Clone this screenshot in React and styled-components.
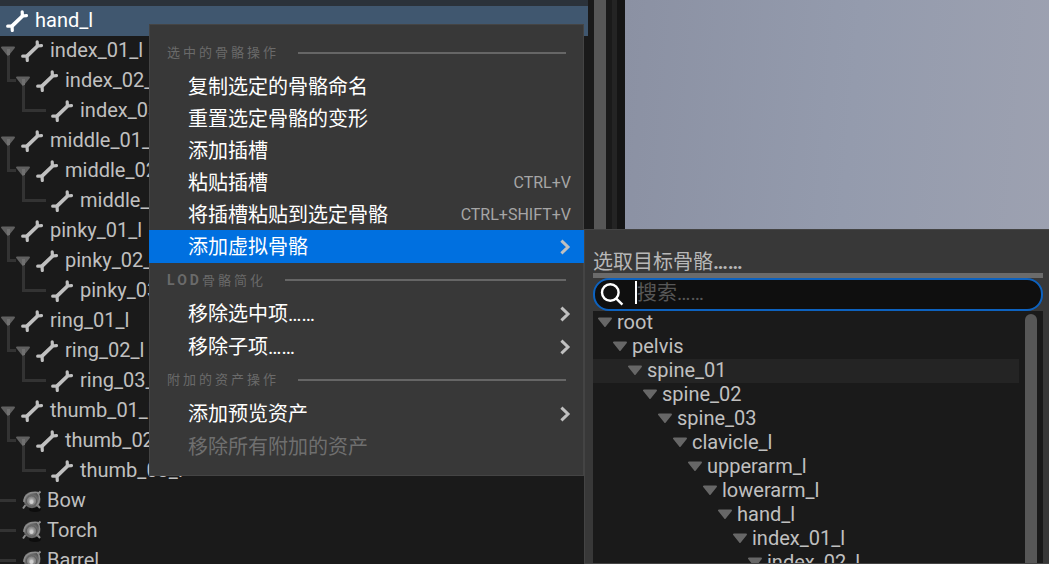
import styled, { createGlobalStyle } from "styled-components";

const GlobalStyle = createGlobalStyle`
  * {
    box-sizing: border-box;
  }

  body {
    margin: 0;
    overflow: hidden;
    background: #1a1a1a;
    color: #c0c0c0;
    font: 20px/24px Roboto, "Noto Sans CJK SC", sans-serif;
  }

  button,
  input {
    margin: 0;
    padding: 0;
    border: 0;
    font: inherit;
  }

  ul {
    margin: 0;
    padding: 0;
    list-style: none;
  }

  svg {
    display: block;
    flex: none;
  }
`;

const Editor = styled.main`
  position: relative;
  display: flex;
  height: 100vh;
  overflow: hidden;
`;

const SkeletonTree = styled.ul`
  flex: 0 0 588px;
  min-width: 0;
  border-top: 6px solid #2b323a;
`;

const TreeRow = styled.li`
  display: flex;
  align-items: center;
  height: 30px;
  white-space: nowrap;
  color: ${({ $selected }) => ($selected ? "#ffffff" : "#c0c0c0")};
  background: ${({ $selected }) => ($selected ? "#40576f" : "transparent")};
`;

const TreeLabel = styled.span`
  padding: 0 0 2px ${({ $gap }) => $gap}px;
`;

const TreeScroll = styled.div`
  flex: 0 0 24px;
  padding: 0 6px;
  background: #1a1a1a;

  div {
    height: 100%;
    background: #575757;
  }
`;

const Splitter = styled.div`
  flex: 0 0 13px;
  border-left: 5px solid #242424;
  background: #151515;
`;

const Viewport = styled.section`
  flex: 1;
  background: linear-gradient(95deg, #8b91a3 0%, #949bad 50%, #9ea2b1 100%);
`;

const ContextMenu = styled.div`
  position: absolute;
  top: 24px;
  left: 149px;
  width: 435px;
  padding: 12px 0 14px;
  background: #383838;
  box-shadow: inset 0 0 0 1px #444444;
`;

const SectionTitle = styled.div`
  display: flex;
  align-items: center;
  gap: 19px;
  height: 34px;
  padding: 0 18px;
  color: #6a6a6a;
  font-size: 13px;
  letter-spacing: 3px;

  b {
    font-size: 14px;
    font-weight: 700;
  }

  &::after {
    content: "";
    flex: 1;
    height: 2px;
    background: #666666;
  }
`;

const ItemSlot = styled.div`
  position: relative;
`;

const MenuItem = styled.button`
  display: flex;
  align-items: center;
  justify-content: space-between;
  width: 100%;
  height: ${({ $submenu }) => ($submenu ? 33 : 32)}px;
  padding: ${({ $submenu }) => ($submenu ? 0 : 2)}px 13px 0 39px;
  text-align: left;
  color: #ffffff;
  background: ${({ $active }) => ($active ? "#0070e0" : "transparent")};

  &:disabled {
    color: #6f6f6f;
  }

  kbd {
    color: #a6a6a6;
    font-family: inherit;
    font-size: 16px;
  }
`;

const BonePicker = styled.div`
  position: absolute;
  top: -1px;
  left: 100%;
  display: flex;
  flex-direction: column;
  width: 466px;
  height: calc(100vh - 229px);
  padding: 20px 6px 0 8px;
  border: 1px solid #444444;
  background: #383838;
`;

const PickerTitle = styled.div`
  height: 28px;
  flex: none;
  border-bottom: 5px solid #6b6b6b;
  line-height: 24px;
  color: #b8b8b8;

  b {
    font-weight: 700;
  }
`;

const SearchBox = styled.label`
  display: flex;
  align-items: center;
  flex: none;
  height: 33px;
  padding: 0 16px 0 5px;
  border: 2px solid #0d62bf;
  border-radius: 16px;
  background: #0f0f0f;

  input {
    flex: 1;
    min-width: 0;
    height: 29px;
    padding-bottom: 4px;
    outline: 0;
    color: #ffffff;
    background: transparent;
  }

  input::placeholder {
    color: #575757;
    opacity: 1;
  }
`;

const Caret = styled.span`
  width: 2px;
  height: 23px;
  margin: 0 0 4px 11px;
  background: #ffffff;
`;

const BoneListBox = styled.div`
  display: flex;
  flex: 1;
  min-height: 0;
  overflow: hidden;
  background: #1a1a1a;
`;

const BoneList = styled.ul`
  flex: 1;
`;

const BoneRow = styled.li`
  display: flex;
  align-items: center;
  gap: 5px;
  height: 24px;
  padding: 0 0 2px ${({ $depth }) => 5 + $depth * 15}px;
  background: ${({ $hover }) => ($hover ? "#242424" : "transparent")};
`;

const BoneScroll = styled.div`
  flex: 0 0 24px;
  padding: 3px 6px 0 6px;

  div {
    height: 100%;
    border-radius: 6px 6px 0 0;
    background: #575757;
  }
`;

const BoneIcon = () => (
  <svg width="22" height="22" viewBox="0 0 22 22" fill="none" stroke="currentColor" strokeLinecap="round" strokeLinejoin="round">
    <path d="M6.5 15.7 16 6.5" strokeWidth="3.8" />
    <path d="M16.2 1.8 16.4 6 20.5 5.6M1.7 16.2 6 16 6.3 20.5" strokeWidth="3.2" />
  </svg>
);

const SocketIcon = () => (
  <svg width="20" height="22" viewBox="0 0 20 22">
    <defs>
      <radialGradient id="socket" cx="47%" cy="55%" r="55%">
        <stop offset="0" stopColor="#d0d0d0" />
        <stop offset=".35" stopColor="#8c8c8c" />
        <stop offset="1" stopColor="#4c4c4c" />
      </radialGradient>
    </defs>
    <ellipse cx="14" cy="19.5" rx="6" ry="2.5" fill="#0d0d0d" />
    <path d="M16 4.5 19.5 1.5M4.5 15 2 18.5M16 14.5 19 18" stroke="#8f8f8f" strokeWidth="2" />
    <ellipse cx="11" cy="10" rx="8.5" ry="8.2" fill="url(#socket)" />
    <path d="M3 12C3 6 8 1.5 16.5 2.5 19.5 6 19 12 15.5 16" fill="none" stroke="#8c8c8c" strokeWidth="1.6" />
    <circle cx="10.5" cy="11" r="5.2" fill="none" stroke="#5c5c5c" strokeWidth="1" />
    <circle cx="10.5" cy="12" r="2" fill="#d0d0d0" />
  </svg>
);

const Chevron = () => (
  <svg width="12" height="16" viewBox="0 0 12 16" fill="none" stroke="#c0c0c0" strokeWidth="3">
    <path d="M2.4 1.6 9 8 2.4 14.4" />
  </svg>
);

const Triangle = () => (
  <svg width="14" height="10" viewBox="0 0 14 10">
    <path d="M1 1.5H13L7 9Z" fill="#676767" stroke="#676767" strokeWidth="2" strokeLinejoin="round" />
  </svg>
);

const SearchIcon = () => (
  <svg width="24" height="24" viewBox="0 0 24 24" fill="none" stroke="#ffffff" strokeWidth="2.4">
    <circle cx="10.3" cy="9.5" r="8.3" />
    <path d="M16.1 15.3 22.4 21.6" />
  </svg>
);

// connector lines and expander arrow in front of a tree row
const Guides = ({ depth, leaf, socket }) => {
  const width = depth * 15 + 6;
  const x = depth * 15 - 7;
  return (
    <svg width={width} height="30" viewBox={`0 0 ${width} 30`}>
      <g fill="none" stroke="#333333" strokeWidth="3">
        {socket && <path d="M0 14.5H16" />}
        {depth > 1 && <path d={`M${x - 14.5} 0V14.5H${leaf ? x + 8 : x - 7}`} />}
        {depth > 0 && !leaf && !socket && <path d={`M${x + 0.5} 18V30`} />}
      </g>
      {depth > 0 && !leaf && !socket && (
        <>
          <path d={`M${x - 6} 11.5H${x + 6}L${x} 19Z`} fill="#606060" stroke="#606060" strokeWidth="2" strokeLinejoin="round" />
          <path d={`M${x + 0.5} 13V19`} stroke="#707070" strokeWidth="3" />
        </>
      )}
    </svg>
  );
};

const fingers = ["index", "middle", "pinky", "ring", "thumb"];
const sockets = ["Bow", "Torch", "Barrel"];
const bones = [
  "root",
  "pelvis",
  "spine_01",
  "spine_02",
  "spine_03",
  "clavicle_l",
  "upperarm_l",
  "lowerarm_l",
  "hand_l",
  "index_01_l",
  "index_02_l",
];

const Bone = ({ name, depth, leaf, selected }) => (
  <TreeRow $selected={selected}>
    <Guides depth={depth} leaf={leaf} />
    <BoneIcon />
    <TreeLabel $gap={7}>{name}</TreeLabel>
  </TreeRow>
);

const App = () => {
  return (
    <Editor>
      <GlobalStyle />

      <SkeletonTree>
        <Bone name="hand_l" depth={0} selected />
        {fingers.map((finger) =>
          [1, 2, 3].map((n) => (
            <Bone key={finger + n} name={`${finger}_0${n}_l`} depth={n} leaf={n === 3} />
          ))
        )}
        {sockets.map((name) => (
          <TreeRow key={name}>
            <Guides depth={1} socket />
            <SocketIcon />
            <TreeLabel $gap={6}>{name}</TreeLabel>
          </TreeRow>
        ))}
      </SkeletonTree>
      <TreeScroll>
        <div />
      </TreeScroll>
      <Splitter />
      <Viewport />

      <ContextMenu>
        <SectionTitle>选中的骨骼操作</SectionTitle>
        <MenuItem>复制选定的骨骼命名</MenuItem>
        <MenuItem>重置选定骨骼的变形</MenuItem>
        <MenuItem>添加插槽</MenuItem>
        <MenuItem>
          粘贴插槽 <kbd>CTRL+V</kbd>
        </MenuItem>
        <MenuItem>
          将插槽粘贴到选定骨骼 <kbd>CTRL+SHIFT+V</kbd>
        </MenuItem>
        <ItemSlot>
          <MenuItem $submenu $active>
            添加虚拟骨骼 <Chevron />
          </MenuItem>
          <BonePicker>
            <PickerTitle>
              选取目标骨骼<b>……</b>
            </PickerTitle>
            <SearchBox>
              <SearchIcon />
              <Caret />
              <input type="text" placeholder="搜索……" aria-label="搜索" />
            </SearchBox>
            <BoneListBox>
              <BoneList>
                {bones.map((name, i) => (
                  <BoneRow key={name} $depth={i} $hover={name === "spine_01"}>
                    <Triangle />
                    {name}
                  </BoneRow>
                ))}
              </BoneList>
              <BoneScroll>
                <div />
              </BoneScroll>
            </BoneListBox>
          </BonePicker>
        </ItemSlot>
        <SectionTitle>
          <span>
            <b>LOD</b>骨骼简化
          </span>
        </SectionTitle>
        <MenuItem $submenu>
          移除选中项…… <Chevron />
        </MenuItem>
        <MenuItem $submenu>
          移除子项…… <Chevron />
        </MenuItem>
        <SectionTitle>附加的资产操作</SectionTitle>
        <MenuItem $submenu>
          添加预览资产 <Chevron />
        </MenuItem>
        <MenuItem disabled>移除所有附加的资产</MenuItem>
      </ContextMenu>
    </Editor>
  );
};

export default App;
